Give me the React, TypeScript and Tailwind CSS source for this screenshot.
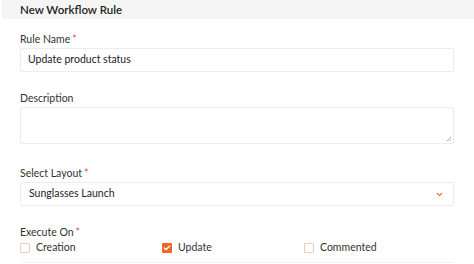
import { ChevronDown, Check } from "lucide-react";

function Label({ text, required }: { text: string; required?: boolean }) {
  return (
    <div className="h-[14px] text-[10.5px] leading-[14px] text-[#333]">
      {text}
      {required && <span className="ml-[2px] text-[#e8503a]">*</span>}
    </div>
  );
}

function Option({ label, checked }: { label: string; checked?: boolean }) {
  return (
    <div className="flex items-center gap-[6px]">
      <span
        className={
          checked
            ? "flex h-[10px] w-[10px] items-center justify-center rounded-[1px] bg-[#f0642a]"
            : "h-[10px] w-[10px] rounded-[1px] border border-[#f5c9b4] bg-white"
        }
      >
        {checked && <Check className="h-[8px] w-[8px] text-white" strokeWidth={4} />}
      </span>
      <span className="text-[10.5px] text-[#333]">{label}</span>
    </div>
  );
}

export default function App() {
  return (
    <div className="h-[264px] w-[474px] overflow-hidden bg-white" style={{ fontFamily: "Lato, 'Open Sans', sans-serif" }}>
      <div className="ml-[2px] flex h-[19px] items-center bg-[#f5f5f5] pl-[18px] text-[11.5px] font-semibold text-[#222]">
        New Workflow Rule
      </div>
      <div className="flex flex-col px-[20px]">
        <div className="mt-[13px]">
          <Label text="Rule Name" required />
          <div className="mt-[2px] flex h-[24px] items-center rounded-[2px] border border-[#ececec] px-[7px] text-[10.5px] text-[#222]">
            Update product status
          </div>
        </div>
        <div className="mt-[19px]">
          <Label text="Description" />
          <div className="relative mt-[2px] h-[37px] rounded-[2px] border border-[#ececec]">
            <svg className="absolute bottom-[1px] right-[1px]" width="6" height="6" viewBox="0 0 6 6">
              <path d="M5 1L1 5M5 3.5L3.5 5" stroke="#999" strokeWidth="0.8" />
            </svg>
          </div>
        </div>
        <div className="mt-[22px]">
          <Label text="Select Layout" required />
          <div className="mt-[2px] flex h-[24px] items-center justify-between rounded-[2px] border border-[#ececec] pl-[8px] pr-[9px] text-[10.5px] text-[#222]">
            <span>Sunglasses Launch</span>
            <ChevronDown className="h-[9px] w-[9px] text-[#f0642a]" strokeWidth={3} />
          </div>
        </div>
        <div className="mt-[19px]">
          <Label text="Execute On" required />
          <div className="mt-[1px] grid h-[16px] grid-cols-[142px_142px_1fr] items-center">
            <Option label="Creation" />
            <Option label="Update" checked />
            <Option label="Commented" />
          </div>
          <div className="ml-[2px] mt-[6px] h-px bg-[#f0f0f0]" />
        </div>
      </div>
    </div>
  );
}
